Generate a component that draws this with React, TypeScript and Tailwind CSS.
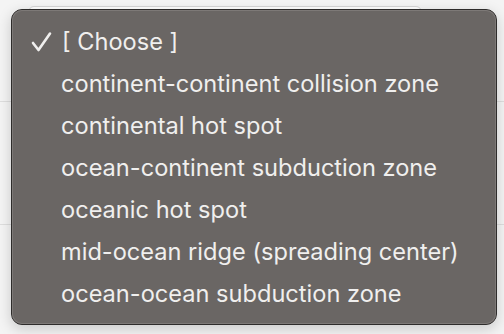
import React from 'react';

const options = [
  'continent-continent collision zone',
  'continental hot spot',
  'ocean-continent subduction zone',
  'oceanic hot spot',
  'mid-ocean ridge (spreading center)',
  'ocean-ocean subduction zone',
];

const Check = () => (
  <svg width="22" height="22" viewBox="0 0 22 22" className="shrink-0">
    <path d="M2 12 L7.5 19 L19 2.5" fill="none" stroke="#f0efee" strokeWidth="2.6" strokeLinecap="round" strokeLinejoin="round" />
  </svg>
);

export default function App() {
  return (
    <div className="relative w-[504px] h-[334px] overflow-hidden bg-[#f4f4f4]" style={{ fontFamily: 'Inter, "Liberation Sans", Arial, sans-serif' }}>
      {/* page behind the open select */}
      <div className="flex flex-col">
        <div className="ml-[28px] mt-[6px] w-[394px] h-[32px] rounded-[6px] border border-[#d6d6d6] bg-white" />
        <div className="mt-[63px] border-t border-[#dedede]" />
        <div className="mt-[122px] border-t border-[#dedede]" />
      </div>

      {/* native dropdown menu */}
      <div className="absolute left-[11px] top-[9px] w-[486px] h-[316px] rounded-[11px] border border-[#2e2c2b] bg-[#6a6664] shadow-[0_4px_14px_rgba(0,0,0,0.18)] pt-[11px] text-[#f0efee] text-[23.6px] leading-[42px]">
        <div className="absolute inset-0 rounded-[10px] ring-1 ring-inset ring-[#7d7977]" />
        <div className="flex items-center h-[42px] pl-[19px]">
          <Check />
          <span className="ml-[9px]">[ Choose ]</span>
        </div>
        {options.map((o) => (
          <div key={o} className="h-[42px] pl-[49px] whitespace-nowrap">
            {o}
          </div>
        ))}
      </div>
    </div>
  );
}
